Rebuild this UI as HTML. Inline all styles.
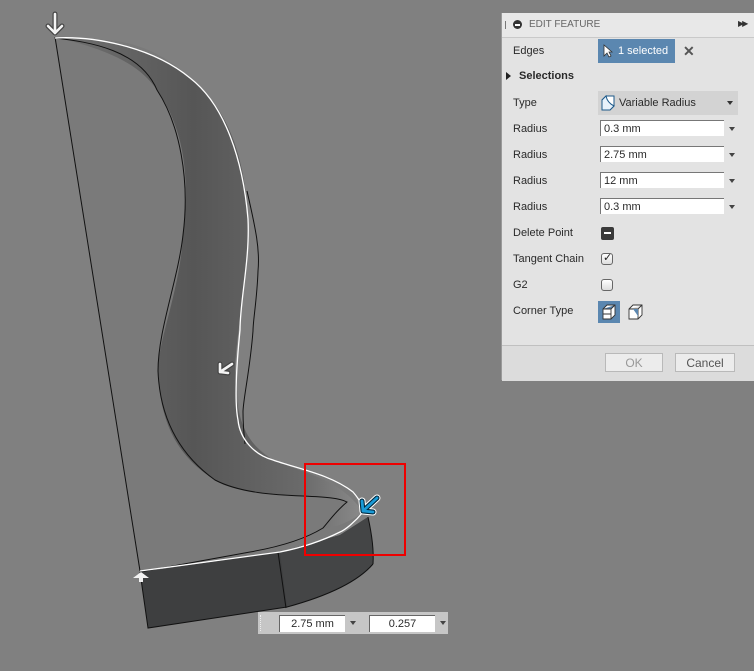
<!DOCTYPE html>
<html><head><style>
html,body{margin:0;padding:0;}
body{width:754px;height:671px;background:#808080;position:relative;overflow:hidden;font-family:"Liberation Sans",Arial,sans-serif;font-size:11px;color:#2a2a2a;}
.abs{position:absolute;}
#panel{left:501px;top:13px;width:253px;height:367px;background:#e3e3e3;border-left:1px solid #9a9a9a;}
.lbl{position:absolute;left:11px;}
.inp{position:absolute;left:98px;height:16px;background:#fff;border-top:1px solid #777;border-left:1px solid #777;font-size:11px;line-height:16px;padding-left:3px;box-sizing:border-box;width:124px;}
.dd{position:absolute;left:227px;width:0;height:0;border-left:3px solid transparent;border-right:3px solid transparent;border-top:4px solid #444;}
.cb{position:absolute;left:99px;width:12px;height:12px;border:1px solid #666;border-radius:3px;background:linear-gradient(#fff,#ddd);box-sizing:border-box;}
.btn{position:absolute;top:340px;height:19px;border:1px solid #b9b9b9;background:#ececec;color:#999;text-align:center;line-height:18px;font-size:12px;box-sizing:border-box;}
</style></head><body>

<svg class="abs" style="left:0;top:0" width="500" height="671" viewBox="0 0 500 671">
<defs>
<linearGradient id="fg" x1="0" y1="0" x2="1" y2="0">
<stop offset="0" stop-color="#727272"/><stop offset="0.45" stop-color="#565656"/><stop offset="0.8" stop-color="#6a6a6a"/><stop offset="1" stop-color="#8a8a8a"/>
</linearGradient>
</defs>
<path d="M55,37 L140,571 L280,552 L340,534 L363,514 L353,492 L317,472 L273,460 L243,436 L235,371 L240,291 L248,219 L237,159 C225,110 180,45 107,40 Z" fill="#7a7a7a"/>
<path d="M55,37 C90,36 150,45 190,78 C230,110 245,160 248,219 C252,260 236,330 235,371 C236,410 240,440 273,460 C300,472 340,478 363,512 C350,522 335,528 323,528 L347,502 C330,498 310,496 303,496 C250,492 230,490 215,480 C175,455 160,420 158,371 C158,340 180,290 183,235 C190,180 185,130 157,90 C140,65 110,50 55,37 Z" fill="url(#fg)"/>
<path d="M280,552 L340,535 L368,517 C372,535 374,550 373,564 C355,585 320,598 287,607 L148,628 L140,572 Z" fill="#3e3f40"/>
<path d="M280,552 L340,535 L368,517 C372,535 374,550 373,564 C355,585 320,598 287,607 Z" fill="#444546"/>
<g fill="none" stroke="#111" stroke-width="1">
<path d="M55,37 L140,571"/>
<path d="M140,572 L148,628 L287,607 C320,598 355,585 373,564"/>
<path d="M278,552 L286,608"/>
<path d="M55,38 C90,42 140,50 157,90 C180,125 190,180 183,235 C178,280 158,330 158,371 C160,420 180,455 215,480 C240,493 275,495 303,496 C325,497 340,498 347,502 C335,512 330,520 323,528 C310,536 290,545 250,552 L140,572"/>
<path d="M247,191 C256,230 260,250 258,271 C257,300 253,320 253,331 C250,370 243,400 243,412 C243,425 244,435 245,444"/>
<path d="M368,517 C372,535 374,550 373,564"/>
</g>
<path d="M55,38 C90,36 150,45 190,78 C225,105 243,160 248,219 C250,260 240,300 240,330 C237,360 234,400 238,420 C240,440 255,455 273,460 C295,468 330,474 353,492 C360,500 364,508 363,512 C355,522 345,530 340,532 C320,542 300,548 280,552 L140,571" fill="none" stroke="#fff" stroke-width="1.3"/>
<!-- arrows -->
<g fill="none" stroke-linecap="round" stroke-linejoin="round">
<g stroke="#444" stroke-width="5"><path d="M55,14 L55,33 M48,26 L55,33 L62,26"/><path d="M232,364 L220,372 M220,364 L220,372 L228,373"/></g>
<g stroke="#f4f4f4" stroke-width="2.6"><path d="M55,14 L55,33 M48,26 L55,33 L62,26"/><path d="M232,364 L220,372 M220,364 L220,372 L228,373"/></g>
<g stroke="#fff" stroke-width="7"><path d="M377,498 L363,511 M362,501 L363,511 L373,512"/></g>
<g stroke="#03283c" stroke-width="5"><path d="M377,498 L363,511 M362,501 L363,511 L373,512"/></g>
<g stroke="#1a9ad6" stroke-width="2.8"><path d="M377,498 L363,511 M362,501 L363,511 L373,512"/></g>
</g>
<path d="M133,578 L141,572 L149,578 L143,578 L143,582 L139,582 L139,578 Z" fill="#f2f2f2"/>
<rect x="305" y="464" width="100" height="91" fill="none" stroke="#e00" stroke-width="2"/>
</svg>

<div class="abs" style="left:258px;top:612px;width:190px;height:22px;background:#c6c6c6;">
<div class="abs" style="left:2px;top:3px;width:3px;height:16px;border-left:1px dotted #eee;"></div>
<div class="abs" style="left:21px;top:3px;width:65px;height:16px;background:#fff;border-top:1px solid #666;border-left:1px solid #666;text-align:center;font-size:11px;line-height:16px;">2.75 mm</div>
<div class="abs" style="left:92px;top:9px;border-left:3px solid transparent;border-right:3px solid transparent;border-top:4px solid #444;"></div>
<div class="abs" style="left:111px;top:3px;width:65px;height:16px;background:#fff;border-top:1px solid #666;border-left:1px solid #666;text-align:center;font-size:11px;line-height:16px;">0.257</div>
<div class="abs" style="left:182px;top:9px;border-left:3px solid transparent;border-right:3px solid transparent;border-top:4px solid #444;"></div>
</div>

<div id="panel" class="abs">
<div class="abs" style="left:0;top:0;width:253px;height:24px;background:#e8e8e8;border-bottom:1px solid #c9c9c9;">
<div class="abs" style="left:3px;top:8px;width:1px;height:8px;background:#777"></div>
<div class="abs" style="left:11px;top:7px;width:9px;height:9px;border-radius:50%;background:#333;"></div>
<div class="abs" style="left:13px;top:11px;width:5px;height:1.5px;background:#fff;"></div>
<div class="abs" style="left:27px;top:6px;color:#666;font-size:10px;">EDIT FEATURE</div>
<div class="abs" style="left:236px;top:6px;color:#333;font-size:8px;letter-spacing:-2px;">▶▶</div>
</div>
<div class="lbl" style="top:32px;">Edges</div>
<div class="abs" style="left:96px;top:26px;width:77px;height:24px;background:#5b87b0;color:#fff;font-size:11px;">
<svg class="abs" style="left:5px;top:5px" width="10" height="14"><path d="M1,1 L1,12 L4,9 L6,13 L8,12 L6,8 L9,8 Z" fill="#fff" stroke="#333" stroke-width="0.8"/></svg>
<div class="abs" style="left:20px;top:6px;">1 selected</div></div>
<div class="abs" style="left:181px;top:30px;font-size:14px;color:#555;font-weight:bold;">✕</div>
<div class="abs" style="left:4px;top:59px;width:0;height:0;border-top:4px solid transparent;border-bottom:4px solid transparent;border-left:5px solid #222;"></div>
<div class="abs" style="left:17px;top:57px;font-weight:bold;font-size:11px;">Selections</div>
<div class="lbl" style="top:84px;">Type</div>
<div class="abs" style="left:96px;top:78px;width:140px;height:24px;background:#d3d3d3;">
<svg class="abs" style="left:2px;top:4px" width="16" height="16"><path d="M2,5 L6,1 L14,1 L14,11 L10,15 L2,15 Z" fill="#fff" stroke="#1d5a8a" stroke-width="1"/><path d="M6,1 C7,6 10,9 14,11 L10,15 L2,15 L2,5 Z" fill="#e8f2fb" stroke="#1d5a8a"/></svg>
<div class="abs" style="left:21px;top:6px;">Variable Radius</div>
<div class="abs" style="left:129px;top:10px;border-left:3px solid transparent;border-right:3px solid transparent;border-top:4px solid #333;"></div>
</div>
<div class="lbl" style="top:110px;">Radius</div><div class="inp" style="top:107px;">0.3 mm</div><div class="dd" style="top:114px;"></div>
<div class="lbl" style="top:136px;">Radius</div><div class="inp" style="top:133px;">2.75 mm</div><div class="dd" style="top:140px;"></div>
<div class="lbl" style="top:162px;">Radius</div><div class="inp" style="top:159px;">12 mm</div><div class="dd" style="top:166px;"></div>
<div class="lbl" style="top:188px;">Radius</div><div class="inp" style="top:185px;">0.3 mm</div><div class="dd" style="top:192px;"></div>
<div class="lbl" style="top:214px;">Delete Point</div>
<div class="abs" style="left:99px;top:214px;width:13px;height:13px;border-radius:2px;background:#3a3a3a;"><div class="abs" style="left:3px;top:5px;width:7px;height:2px;background:#fff;"></div></div>
<div class="lbl" style="top:240px;">Tangent Chain</div>
<div class="cb" style="top:240px;"><div class="abs" style="left:1px;top:-3px;font-size:11px;color:#222;">✓</div></div>
<div class="lbl" style="top:266px;">G2</div>
<div class="cb" style="top:266px;"></div>
<div class="lbl" style="top:292px;">Corner Type</div>
<div class="abs" style="left:96px;top:288px;width:22px;height:22px;background:#5b87b0;">
<svg class="abs" style="left:3px;top:3px" width="16" height="16"><path d="M2,5 L6,1 L14,1 L14,11 L10,15 L2,15 Z M2,5 L10,5 L14,1 M10,5 L10,15 M2,10 L10,10" fill="#fff" stroke="#333" stroke-width="0.9"/></svg></div>
<div class="abs" style="left:125px;top:290px;"><svg width="18" height="18"><path d="M2,6 L6,2 L15,2 L15,12 L11,16 L2,16 Z M2,6 L11,6 L15,2 M11,6 L11,16" fill="#fff" stroke="#333" stroke-width="0.9"/><path d="M6,6 C8,9 10,11 11,14 L11,6 Z" fill="#5b87b0"/></svg></div>
<div class="abs" style="left:0;top:332px;width:253px;height:35px;background:#dcdcdc;border-top:1px solid #c0c0c0;"></div>
<div class="btn" style="left:103px;width:58px;">OK</div>
<div class="btn" style="left:173px;width:60px;color:#555;">Cancel</div>
</div>
</body></html>
